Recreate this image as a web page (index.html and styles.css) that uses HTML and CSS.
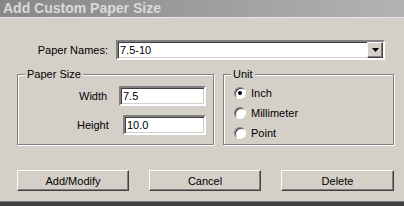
FILE: index.html
```html
<!DOCTYPE html>
<html lang="en">
<head>
  <meta charset="UTF-8">
  <title>Add Custom Paper Size</title>
  <link rel="stylesheet" href="styles.css">
</head>
<body>
  <div class="dialog">
    <div class="titlebar">Add Custom Paper Size</div>

    <div class="content">
      <div class="names-row">
        <label class="names-label">Paper Names:</label>
        <div class="combo">
          <span class="combo-text">7.5-10</span>
          <span class="combo-btn">
            <svg width="7" height="4" viewBox="0 0 7 4"><path d="M0 0h7L3.5 4z" fill="#000"/></svg>
          </span>
        </div>
      </div>

      <div class="groups">
        <fieldset class="group paper-group">
          <legend>Paper Size</legend>
          <div class="field-row width-row">
            <span class="field-label">Width</span>
            <div class="textbox">7.5</div>
          </div>
          <div class="field-row height-row">
            <span class="field-label">Height</span>
            <div class="textbox">10.0</div>
          </div>
        </fieldset>

        <fieldset class="group unit-group">
          <legend>Unit</legend>
          <div class="radio-row"><span class="radio checked"></span>Inch</div>
          <div class="radio-row"><span class="radio"></span>Millimeter</div>
          <div class="radio-row"><span class="radio"></span>Point</div>
        </fieldset>
      </div>

      <div class="buttons">
        <button class="btn">Add/Modify</button>
        <button class="btn">Cancel</button>
        <button class="btn wide">Delete</button>
      </div>
    </div>

    <div class="bottom-edge"></div>
  </div>
</body>
</html>
```

FILE: styles.css
```css
body {
  margin: 0;
  background: #d4d0c8;
  font-family: 'Liberation Sans', Arial, sans-serif;
  font-size: 11px;
  color: #000;
}

.dialog {
  width: 404px;
  height: 206px;
  display: flex;
  flex-direction: column;
  background: #d4d0c8;
}

.titlebar {
  height: 17px;
  line-height: 17px;
  padding-left: 3px;
  background: linear-gradient(to right, #878787, #b3b3b3);
  border-bottom: 1px solid #e6e6e6;
  color: #dadada;
  font-weight: bold;
  font-size: 14px;
}

.content {
  padding: 22px 0 0 17px;
}

/* paper names combo */
.names-row {
  display: flex;
  align-items: center;
  gap: 8px;
  height: 20px;
}

.names-label {
  width: 91px;
  text-align: right;
}

.combo {
  width: 265px;
  height: 16px;
  display: flex;
  align-items: center;
  justify-content: space-between;
  background: #fff;
  border: 2px solid;
  border-color: #808080 #fff #fff #808080;
  box-shadow: inset 1px 1px 0 #404040, inset -1px -1px 0 #d4d0c8;
}

.combo-text {
  padding-left: 2px;
}

.combo-btn {
  width: 14px;
  height: 14px;
  display: flex;
  align-items: center;
  justify-content: center;
  background: #d4d0c8;
  border: 1px solid;
  border-color: #fff #404040 #404040 #fff;
  box-shadow: inset -1px -1px 0 #808080;
}

/* group boxes */
.groups {
  display: flex;
  gap: 9px;
  margin-top: 8px;
}

.group {
  margin: 0;
  padding: 0;
  height: 75px;
  border: 1px solid #808080;
  box-shadow: 1px 1px 0 #fff, inset 1px 1px 0 #fff;
}

.group legend {
  line-height: 13px;
  padding: 0 2px;
  margin-left: 7px;
  background: #d4d0c8;
}

.paper-group {
  width: 195px;
}

.unit-group {
  width: 169px;
}

.field-row {
  display: flex;
  align-items: center;
  height: 20px;
}

.width-row {
  margin-top: 5px;
  padding-left: 61px;
}

.width-row .field-label {
  width: 40px;
}

.height-row {
  margin-top: 9px;
  padding-left: 59px;
}

.height-row .field-label {
  width: 46px;
}

.textbox {
  height: 16px;
  line-height: 16px;
  padding-left: 2px;
  background: #fff;
  border: 2px solid;
  border-color: #808080 #fff #fff #808080;
  box-shadow: inset 1px 1px 0 #404040, inset -1px -1px 0 #d4d0c8;
}

.width-row .textbox {
  width: 81px;
}

.height-row .textbox {
  width: 77px;
}

/* radios */
.radio-row {
  display: flex;
  align-items: center;
  gap: 5px;
  height: 20px;
  padding-left: 10px;
}

.radio-row:first-of-type {
  margin-top: 2px;
}

.radio {
  width: 10px;
  height: 10px;
  border-radius: 50%;
  background: #fff;
  border: 1px solid;
  border-color: #808080 #fff #fff #808080;
  box-shadow: inset 1px 1px 0 #404040;
  display: flex;
  align-items: center;
  justify-content: center;
}

.radio.checked::after {
  content: '';
  width: 4px;
  height: 4px;
  border-radius: 50%;
  background: #000;
}

/* buttons */
.buttons {
  display: flex;
  gap: 20px;
  margin-top: 25px;
}

.btn {
  width: 112px;
  height: 21px;
  padding: 0;
  font: inherit;
  color: #000;
  background: #d4d0c8;
  border: 1px solid;
  border-color: #fff #404040 #404040 #fff;
  box-shadow: inset -1px -1px 0 #808080;
}

.btn.wide {
  width: 113px;
}

.bottom-edge {
  margin-top: auto;
  height: 4px;
  border-top: 1px solid #808080;
  background: #404040;
}
```
